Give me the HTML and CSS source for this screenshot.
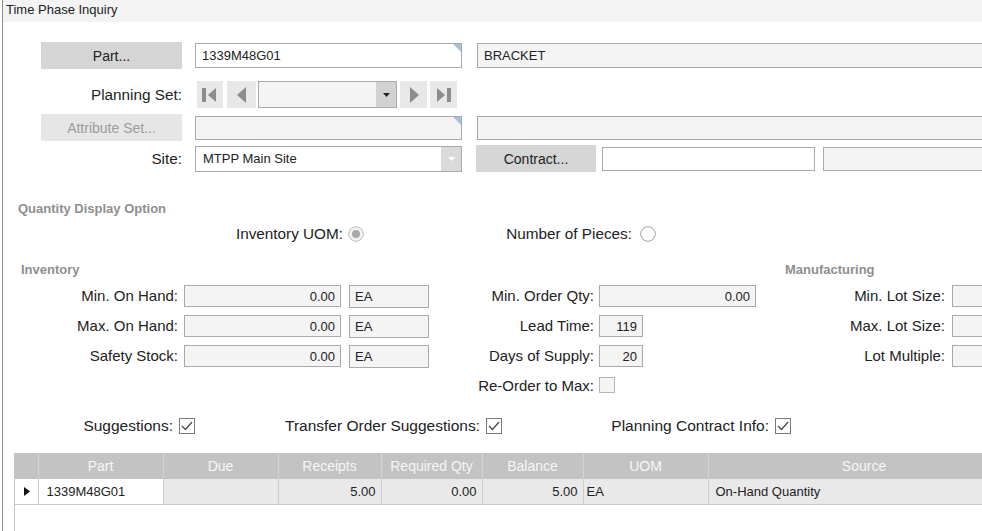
FILE: index.html
```html
<!DOCTYPE html>
<html lang="en">
<head>
  <meta charset="UTF-8">
  <title>Time Phase Inquiry</title>
  <link rel="stylesheet" href="styles.css">
</head>
<body>

<div class="window">
  <div class="title-bar">Time Phase Inquiry</div>

  <div class="top-form">
    <div class="row">
      <button class="lookup-btn">Part...</button>
      <span class="marked field-main">
        <input class="field editable" type="text" value="1339M48G01">
      </span>
      <input class="field field-desc" type="text" value="BRACKET" readonly>
    </div>

    <div class="row row-planning">
      <label class="row-label">Planning Set:</label>
      <div class="nav">
        <button class="nav-btn nav-first">
          <svg width="16" height="16" viewBox="0 0 16 16"><rect x="0" y="1" width="4" height="14" fill="#8c8c8c"/><polygon points="14,1 6,8 14,15" fill="#8c8c8c"/></svg>
        </button>
        <button class="nav-btn nav-prev">
          <svg width="10" height="16" viewBox="0 0 10 16"><polygon points="9,0 0,8 9,16" fill="#8c8c8c"/></svg>
        </button>
        <div class="combo combo-set">
          <span class="combo-text"></span>
          <span class="combo-drop dark">
            <svg width="7" height="4" viewBox="0 0 7 4"><polygon points="0,0 7,0 3.5,4" fill="#222"/></svg>
          </span>
        </div>
        <button class="nav-btn nav-next">
          <svg width="10" height="16" viewBox="0 0 10 16"><polygon points="1,0 10,8 1,16" fill="#8c8c8c"/></svg>
        </button>
        <button class="nav-btn nav-last">
          <svg width="16" height="16" viewBox="0 0 16 16"><polygon points="1,1 9,8 1,15" fill="#8c8c8c"/><rect x="11" y="1" width="4" height="14" fill="#8c8c8c"/></svg>
        </button>
      </div>
    </div>

    <div class="row row-attr">
      <button class="lookup-btn" disabled>Attribute Set...</button>
      <span class="marked field-main">
        <input class="field" type="text" value="" readonly>
      </span>
      <input class="field field-desc" type="text" value="" readonly>
    </div>

    <div class="row row-site">
      <label class="row-label">Site:</label>
      <div class="combo combo-site">
        <span class="combo-text">MTPP Main Site</span>
        <span class="combo-drop light">
          <svg width="7" height="4" viewBox="0 0 7 4"><polygon points="0,0 7,0 3.5,4" fill="#fff"/></svg>
        </span>
      </div>
      <button class="lookup-btn contract-btn">Contract...</button>
      <input class="field editable contract-no" type="text" value="">
      <input class="field contract-desc" type="text" value="" readonly>
    </div>
  </div>

  <div class="section-title qty-title">Quantity Display Option</div>

  <div class="radio-row">
    <div class="radio-item uom-item">
      <span>Inventory UOM:</span>
      <svg width="16" height="16" viewBox="0 0 16 16"><circle cx="8" cy="8" r="7.3" fill="#f3f3f3" stroke="#bdbdbd"/><circle cx="8" cy="8" r="4" fill="#a9a9a9"/></svg>
    </div>
    <div class="radio-item pieces-item">
      <span>Number of Pieces:</span>
      <svg width="16" height="16" viewBox="0 0 16 16"><circle cx="8" cy="8" r="7.3" fill="#fff" stroke="#9e9e9e"/></svg>
    </div>
  </div>

  <div class="inv-block">
    <div class="inv-col col-inventory">
      <div class="section-title col-head">Inventory</div>
      <div class="inv-rows">
        <div class="inv-row">
          <label class="inv-label">Min. On Hand:</label>
          <input class="field num qty" type="text" value="0.00" readonly>
          <input class="field uom" type="text" value="EA" readonly>
        </div>
        <div class="inv-row">
          <label class="inv-label">Max. On Hand:</label>
          <input class="field num qty" type="text" value="0.00" readonly>
          <input class="field uom" type="text" value="EA" readonly>
        </div>
        <div class="inv-row">
          <label class="inv-label">Safety Stock:</label>
          <input class="field num qty" type="text" value="0.00" readonly>
          <input class="field uom" type="text" value="EA" readonly>
        </div>
      </div>
    </div>

    <div class="inv-col col-order">
      <div class="section-title col-head">&nbsp;</div>
      <div class="inv-rows">
        <div class="inv-row">
          <label class="inv-label">Min. Order Qty:</label>
          <input class="field num qty" type="text" value="0.00" readonly>
        </div>
        <div class="inv-row">
          <label class="inv-label">Lead Time:</label>
          <input class="field num short" type="text" value="119" readonly>
        </div>
        <div class="inv-row">
          <label class="inv-label">Days of Supply:</label>
          <input class="field num short" type="text" value="20" readonly>
        </div>
        <div class="inv-row">
          <label class="inv-label">Re-Order to Max:</label>
          <svg class="box" width="16" height="16" viewBox="0 0 16 16"><rect x="0.5" y="0.5" width="15" height="15" fill="#f4f4f4" stroke="#b5b5b5"/></svg>
        </div>
      </div>
    </div>

    <div class="inv-col col-mfg">
      <div class="section-title col-head">Manufacturing</div>
      <div class="inv-rows">
        <div class="inv-row">
          <label class="inv-label">Min. Lot Size:</label>
          <input class="field lot" type="text" value="" readonly>
        </div>
        <div class="inv-row">
          <label class="inv-label">Max. Lot Size:</label>
          <input class="field lot" type="text" value="" readonly>
        </div>
        <div class="inv-row">
          <label class="inv-label">Lot Multiple:</label>
          <input class="field lot" type="text" value="" readonly>
        </div>
      </div>
    </div>
  </div>

  <div class="check-row">
    <div class="check-item item-sugg">
      <span>Suggestions:</span>
      <svg width="16" height="16" viewBox="0 0 16 16"><rect x="0.5" y="0.5" width="15" height="15" fill="#fff" stroke="#7a7a7a"/><polyline points="3,8 6.5,11.5 13,4" fill="none" stroke="#4a4a4a" stroke-width="1.3"/></svg>
    </div>
    <div class="check-item item-transfer">
      <span>Transfer Order Suggestions:</span>
      <svg width="16" height="16" viewBox="0 0 16 16"><rect x="0.5" y="0.5" width="15" height="15" fill="#fff" stroke="#7a7a7a"/><polyline points="3,8 6.5,11.5 13,4" fill="none" stroke="#4a4a4a" stroke-width="1.3"/></svg>
    </div>
    <div class="check-item item-contract">
      <span>Planning Contract Info:</span>
      <svg width="16" height="16" viewBox="0 0 16 16"><rect x="0.5" y="0.5" width="15" height="15" fill="#fff" stroke="#7a7a7a"/><polyline points="3,8 6.5,11.5 13,4" fill="none" stroke="#4a4a4a" stroke-width="1.3"/></svg>
    </div>
  </div>

  <div class="grid">
    <table>
      <colgroup>
        <col style="width:23px">
        <col style="width:125px">
        <col style="width:115px">
        <col style="width:103px">
        <col style="width:101px">
        <col style="width:101px">
        <col style="width:125px">
        <col style="width:312px">
      </colgroup>
      <thead>
        <tr>
          <th></th>
          <th>Part</th>
          <th>Due</th>
          <th>Receipts</th>
          <th>Required Qty</th>
          <th>Balance</th>
          <th>UOM</th>
          <th>Source</th>
        </tr>
      </thead>
      <tbody>
        <tr>
          <td class="selector">
            <svg width="6" height="9" viewBox="0 0 6 9"><polygon points="0,0 6,4.5 0,9" fill="#111"/></svg>
          </td>
          <td class="cell-part">1339M48G01</td>
          <td></td>
          <td class="num">5.00</td>
          <td class="num">0.00</td>
          <td class="num">5.00</td>
          <td class="cell-uom">EA</td>
          <td class="cell-source">On-Hand Quantity</td>
        </tr>
      </tbody>
    </table>
  </div>
</div>

</body>
</html>
```

FILE: styles.css
```css
* {
  box-sizing: border-box;
}

body {
  margin: 0;
  overflow: hidden;
  font-family: "Liberation Sans", Arial, sans-serif;
  color: #222;
  background: #fff;
}

.window {
  margin-left: 2px;
  width: 980px;
  height: 531px;
  border-left: 1px solid #8c8c8c;
  overflow: hidden;
}

.title-bar {
  height: 22px;
  line-height: 20px;
  padding-left: 3px;
  font-size: 13px;
  background: #f3f3f3;
}

/* top lookup rows */

.top-form {
  padding: 20px 0 0 38px;
}

.row {
  display: flex;
  align-items: center;
  height: 27px;
}

.row-planning {
  margin-top: 12px;
}

.row-attr {
  margin-top: 6px;
}

.row-site {
  margin-top: 4px;
}

.lookup-btn {
  flex: none;
  width: 141px;
  height: 27px;
  padding: 0;
  border: none;
  background: #d5d5d5;
  font-family: inherit;
  font-size: 14px;
  color: #222;
}

.lookup-btn:disabled {
  background: #e6e6e6;
  color: #9c9c9c;
}

.row-label {
  flex: none;
  width: 141px;
  text-align: right;
  font-size: 15.3px;
}

.field {
  flex: none;
  height: 25px;
  padding: 0 6px;
  border: 1px solid #a9a9a9;
  background: #f4f4f4;
  font-family: inherit;
  font-size: 13px;
  color: #222;
  outline: none;
}

.field.editable {
  background: #fff;
}

.marked {
  position: relative;
  display: block;
  flex: none;
}

.marked .field {
  display: block;
  width: 100%;
}

.marked::after {
  content: "";
  position: absolute;
  top: 1px;
  right: 1px;
  border-top: 8px solid #a7c1e2;
  border-left: 8px solid transparent;
}

.field-main {
  width: 267px;
  margin-left: 13px;
}

.field-desc {
  width: 560px;
  margin-left: 15px;
}

.row-attr .field-main .field,
.row-attr .field-desc {
  height: 24px;
}

/* planning set navigator */

.nav {
  display: flex;
  align-items: center;
  margin-left: 15px;
}

.nav-btn {
  flex: none;
  height: 27px;
  padding: 0;
  border: none;
  background: #e8e8e8;
  display: flex;
  align-items: center;
  justify-content: center;
}

.nav-first {
  width: 26px;
}

.nav-prev {
  width: 29px;
  margin-left: 4px;
}

.nav-next {
  width: 27px;
  margin-left: 3px;
}

.nav-last {
  width: 27px;
  margin-left: 3px;
}

.combo {
  flex: none;
  display: flex;
  border: 1px solid #a9a9a9;
  font-size: 13px;
}

.combo-set {
  width: 139px;
  height: 27px;
  margin-left: 2px;
  background: #f4f4f4;
}

.combo-site {
  width: 267px;
  height: 26px;
  margin-left: 13px;
  background: #fff;
}

.combo-text {
  flex: 1;
  padding-left: 7px;
  line-height: 24px;
}

.combo-drop {
  width: 20px;
  display: flex;
  align-items: center;
  justify-content: center;
}

.combo-drop.dark {
  background: #d2d2d2;
}

.combo-drop.light {
  background: #dadada;
}

.contract-btn {
  width: 120px;
  margin-left: 14px;
}

.contract-no {
  width: 213px;
  height: 24px;
  margin-left: 6px;
}

.contract-desc {
  width: 300px;
  height: 24px;
  margin-left: 8px;
}

/* sections */

.section-title {
  font-size: 13px;
  font-weight: bold;
  color: #8e8e8e;
  line-height: 16px;
}

.qty-title {
  margin-top: 29px;
  padding-left: 15px;
}

.radio-row {
  display: flex;
  height: 20px;
  margin-top: 7px;
  font-size: 15.3px;
}

.radio-item {
  flex: none;
  display: flex;
  align-items: center;
  justify-content: flex-end;
  gap: 5px;
}

.uom-item {
  width: 361px;
}

.pieces-item {
  width: 292px;
  gap: 8px;
}

.inv-block {
  display: flex;
  margin-top: 18px;
}

.inv-col {
  flex: none;
}

.col-inventory {
  width: 426px;
}

.col-inventory .col-head {
  padding-left: 18px;
}

.col-order {
  width: 327px;
}

.col-mfg {
  width: 227px;
}

.col-mfg .col-head {
  padding-left: 29px;
}

.inv-rows {
  display: flex;
  flex-direction: column;
  gap: 8px;
  margin-top: 7px;
}

.inv-row {
  display: flex;
  align-items: flex-start;
  height: 22px;
}

.inv-label {
  flex: none;
  line-height: 22px;
  text-align: right;
  font-size: 15px;
}

.col-inventory .inv-label {
  width: 175px;
}

.col-order .inv-label {
  width: 165px;
}

.col-mfg .inv-label {
  width: 189px;
}

.inv-row .field {
  height: 22px;
}

.field.num {
  text-align: right;
  padding-right: 5px;
}

.qty {
  width: 157px;
  margin-left: 6px;
}

.col-order .qty,
.short {
  margin-left: 5px;
}

.short {
  width: 44px;
}

.inv-row .uom {
  width: 80px;
  height: 23px;
  margin-left: 8px;
  padding-left: 5px;
}

.box {
  margin: 2px 0 0 5px;
}

.lot {
  width: 31px;
  margin-left: 7px;
  border-right: none;
}

/* checkboxes */

.check-row {
  display: flex;
  height: 20px;
  margin-top: 19px;
  font-size: 15.5px;
}

.check-item {
  flex: none;
  display: flex;
  align-items: center;
  justify-content: flex-end;
  gap: 6px;
}

.item-sugg {
  width: 192px;
}

.item-transfer {
  width: 307px;
}

.item-contract {
  width: 289px;
}

/* result grid */

.grid {
  margin: 17px 0 0 11px;
  height: 100px;
  border-left: 1px solid #c6c6c6;
  overflow: hidden;
}

.grid table {
  border-collapse: collapse;
  table-layout: fixed;
  width: 1005px;
}

.grid th {
  height: 26px;
  padding: 0;
  background: #c3c3c3;
  border-right: 1px solid #d4d4d4;
  color: #f6f6f6;
  font-size: 14px;
  font-weight: normal;
  text-align: center;
}

.grid td {
  height: 25px;
  padding: 0 5px;
  background: #e9e9e9;
  border-right: 1px solid #cbcbcb;
  border-bottom: 1px solid #c8c8c8;
  font-size: 13px;
  white-space: nowrap;
}

.grid td.num {
  text-align: right;
}

.grid td.selector {
  background: #fff;
  padding: 0 0 0 9px;
}

.grid td.selector svg {
  display: block;
}

.grid td.cell-part {
  background: #fff;
  padding-left: 8px;
}

.grid td.cell-uom {
  padding-left: 3px;
}

.grid td.cell-source {
  padding-left: 7px;
}
```
